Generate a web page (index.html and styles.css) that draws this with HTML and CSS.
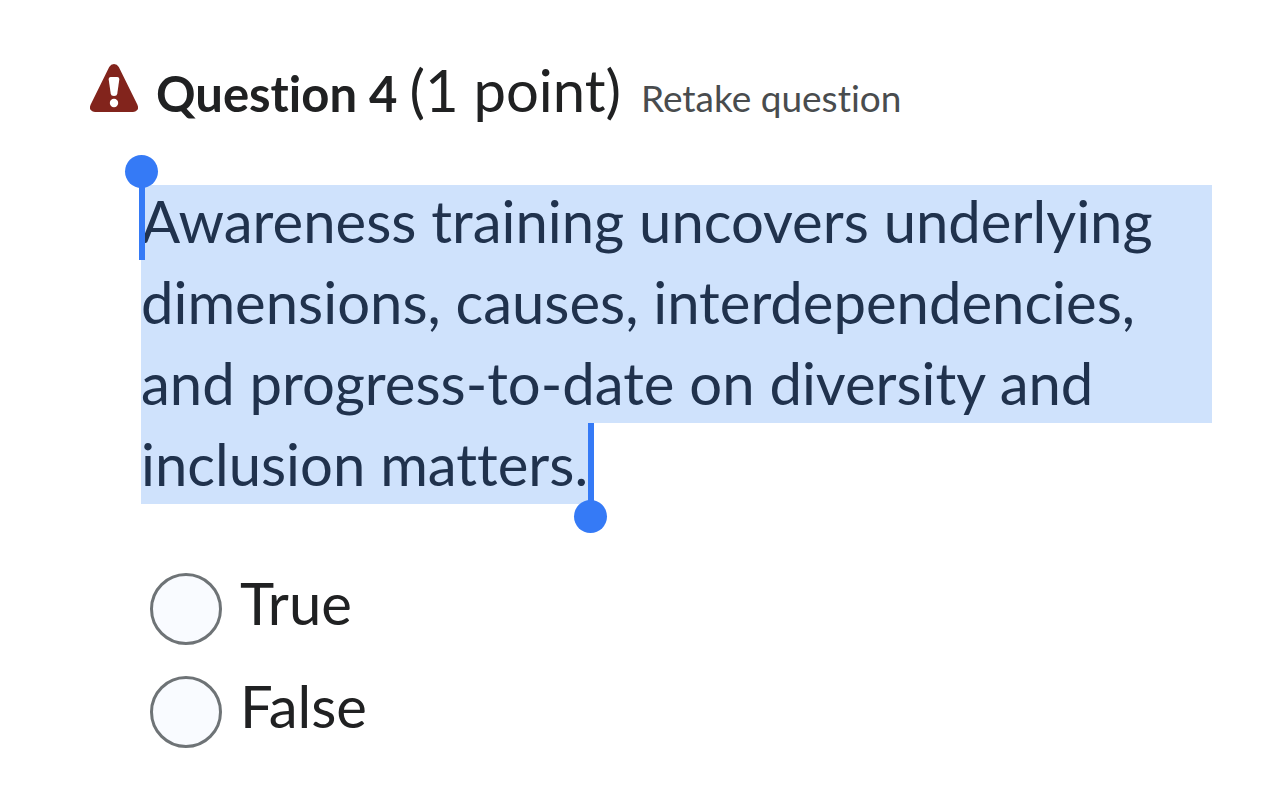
FILE: index.html
```html
<!DOCTYPE html>
<html lang="en">
<head>
  <meta charset="UTF-8">
  <meta name="viewport" content="width=device-width, initial-scale=1.0">
  <title>Question 4</title>
  <link rel="stylesheet" href="styles.css">
</head>
<body>
  <main class="question">
    <header class="question-header">
      <svg class="warning-icon" viewBox="0 0 48 48" role="img" aria-label="Warning">
        <path fill="#82241c" d="M19.200 3Q20.900 0 24 0T28.800 3L47.300 40.500Q49 44.300 47 46.300Q45.500 48 43 48H5Q2.500 48 1 46.300Q-1 44.300 .700 40.500Z"/>
        <path fill="#fff" d="M20.500 13H27.500Q29.600 13 29.300 15.500L27.300 29.500Q26.900 32 24 32T20.700 29.500L18.700 15.500Q18.400 13 20.500 13Z"/>
        <circle fill="#fff" cx="24" cy="39" r="4.200"/>
      </svg>
      <h1 class="title">Question 4</h1>
      <span class="points">(1 point)</span>
      <span class="retake">Retake question</span>
    </header>

    <form class="question-body">
      <p class="question-text" id="question-text">
        <span class="line first">Awareness training uncovers underlying</span>
        <span class="line">dimensions, causes, interdependencies,</span>
        <span class="line">and progress-to-date on diversity and</span>
        <span class="line last">inclusion matters.</span>
      </p>

      <div class="answers" role="radiogroup" aria-labelledby="question-text">
        <div class="answer">
          <input type="radio" name="answer" id="answer-true" value="true">
          <label for="answer-true">True</label>
        </div>
        <div class="answer">
          <input type="radio" name="answer" id="answer-false" value="false">
          <label for="answer-false">False</label>
        </div>
      </div>
    </form>
  </main>
</body>
</html>
```
FILE: styles.css
```css
* {
  box-sizing: border-box;
}

body {
  margin: 0;
  background-color: #fff;
  color: #202122;
  font-family: Lato, sans-serif;
  font-size: 58px;
  font-variant-ligatures: none;
}

.question {
  padding: 56px 72px 40px 90px;
}

.question-header {
  display: flex;
  align-items: baseline;
  line-height: 68px;
}

.warning-icon {
  width: 48px;
  height: 48px;
  margin-right: 18px;
}

.title {
  margin: 0 12px 0 0;
  font-size: 49px;
  font-weight: bold;
}

.points {
  margin-right: 20px;
}

.retake {
  color: #494c4e;
  font-size: 37px;
}

.question-body {
  padding-left: 51px;
}

/* selected text */
.question-text {
  margin: 48px 0 0;
  color: #20324d;
  line-height: 81px;
}

.line {
  display: block;
  position: relative;
  background-color: #cfe2fc;
}

.line.first {
  background: linear-gradient(#cfe2fc, #cfe2fc) 0 5px no-repeat;
}

.line.last {
  width: fit-content;
}

/* selection handles */
.first::before,
.first::after,
.last::before,
.last::after {
  content: "";
  position: absolute;
  background-color: #357af6;
}

.first::before,
.last::before {
  width: 6px;
  height: 80px;
}

.first::after,
.last::after {
  width: 33px;
  height: 33px;
  border-radius: 50%;
}

.first::before {
  top: 0;
  left: -2px;
}

.first::after {
  top: -25px;
  left: -16px;
}

.last::before {
  top: 0;
  right: -6px;
}

.last::after {
  bottom: -29px;
  right: -19px;
}

.answers {
  display: flex;
  flex-direction: column;
  gap: 31px;
  margin-top: 69px;
  padding-left: 9px;
}

.answer {
  display: flex;
  align-items: center;
  gap: 18px;
}

.answer input {
  appearance: none;
  width: 72px;
  height: 72px;
  margin: 0;
  border: 3px solid #6e7376;
  border-radius: 50%;
  background-color: #f9fbff;
}

.answer label {
  line-height: 72px;
  padding-bottom: 6px;
  margin-top: -6px;
}
```
